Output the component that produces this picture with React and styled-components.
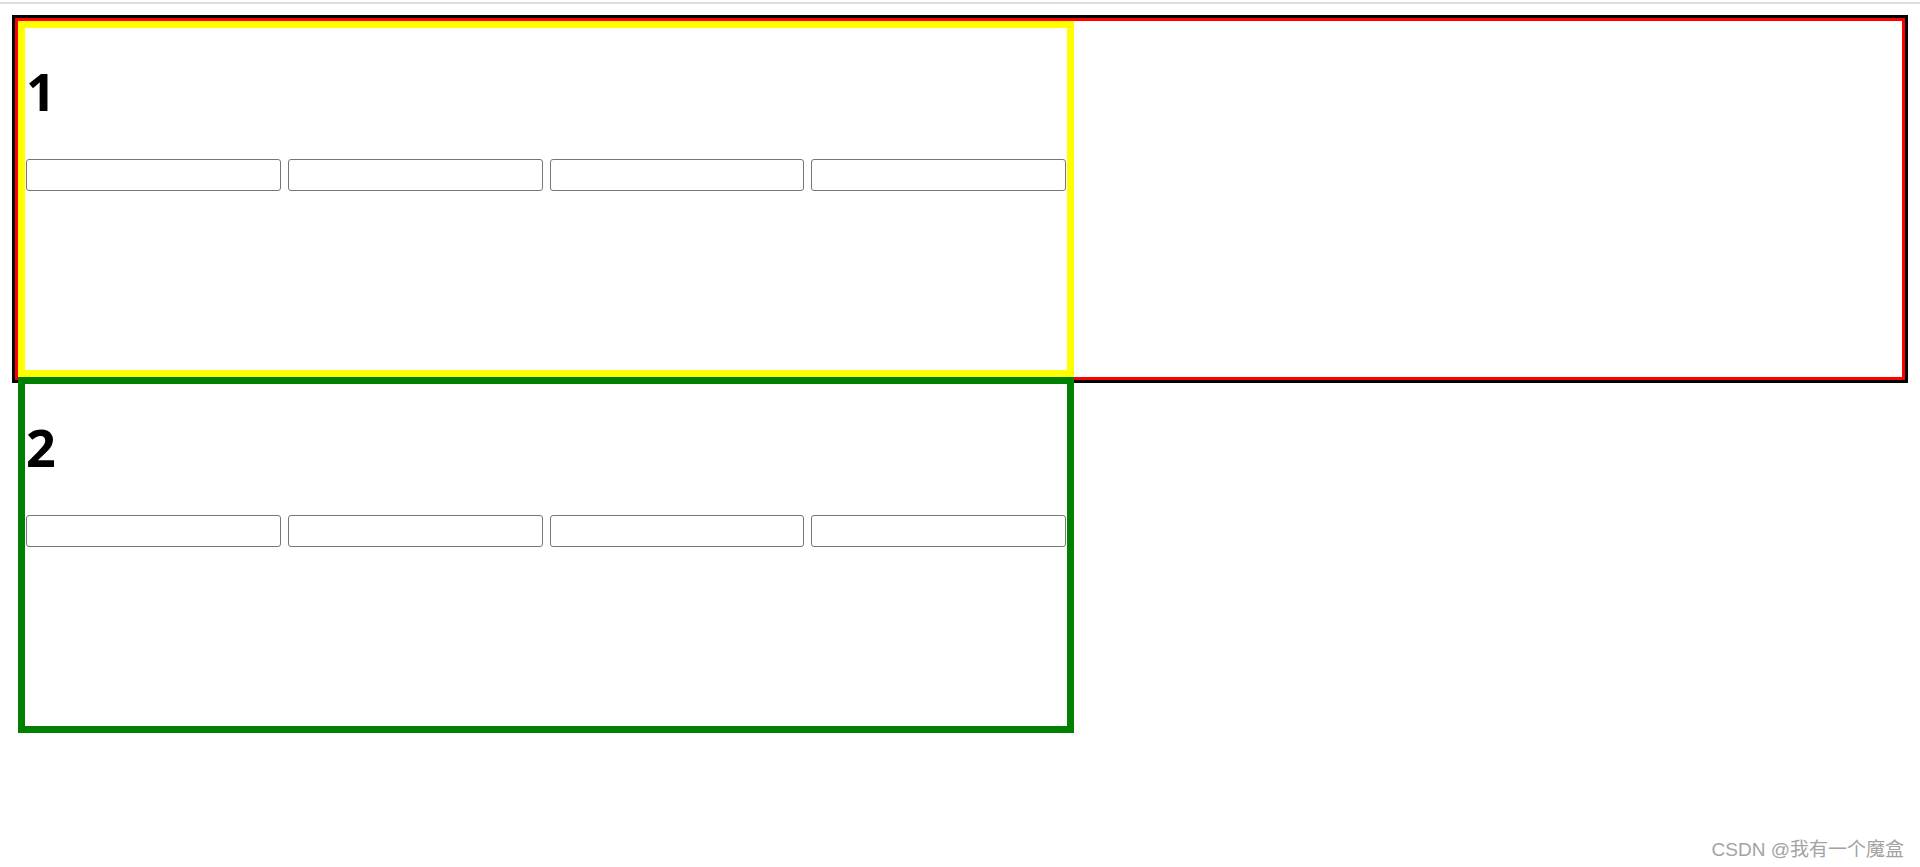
import styled, { createGlobalStyle } from "styled-components";

const GlobalStyle = createGlobalStyle`
  html, body {
    margin: 0;
    padding: 0;
    background: #fff;
  }
  body {
    font-family: "Noto Sans", "Open Sans", sans-serif;
  }
`;

const Page = styled.div`
  position: relative;
  min-height: 867px;
  padding-top: 2px;
  box-sizing: border-box;
  overflow: hidden;
`;

const TopRule = styled.div`
  height: 2px;
  background: #dcdcdc;
  margin-bottom: 11px;
`;

const Outer = styled.div`
  margin: 0 12px;
  border: 3px solid #000;
`;

const Frame = styled.div`
  height: 356px;
  border: 3px solid #ff0000;
`;

const Box = styled.section`
  box-sizing: border-box;
  width: 1056px;
  height: 356px;
  padding: 0 1px;
  border: 7px solid ${(props) => props.$color};
`;

const Title = styled.h1`
  margin: 32px 0 37px;
  font-size: 52px;
  line-height: 62px;
  font-weight: 700;
  color: #000;
`;

const Fields = styled.div`
  display: flex;
  gap: 7px;
`;

const Field = styled.input`
  box-sizing: border-box;
  width: 255px;
  height: 32px;
  margin: 0;
  padding: 0 4px;
  border: 1px solid #767676;
  border-radius: 3px;
  background: #fff;
  font-size: 16px;
`;

const Watermark = styled.div`
  position: absolute;
  right: 16px;
  top: 838px;
  font-family: "Liberation Sans", "Noto Sans CJK SC", sans-serif;
  font-size: 19px;
  line-height: 23px;
  color: #a3a3a3;
`;

function Block({ label, color }) {
  return (
    <Box $color={color}>
      <Title>{label}</Title>
      <Fields>
        {[0, 1, 2, 3].map((i) => (
          <Field key={i} type="text" />
        ))}
      </Fields>
    </Box>
  );
}

export default function App() {
  return (
    <>
      <GlobalStyle />
      <Page>
        <TopRule />
        <Outer>
          <Frame>
            <Block label="1" color="#ffff00" />
            <Block label="2" color="#008000" />
          </Frame>
        </Outer>
        <Watermark>CSDN @我有一个魔盒</Watermark>
      </Page>
    </>
  );
}
